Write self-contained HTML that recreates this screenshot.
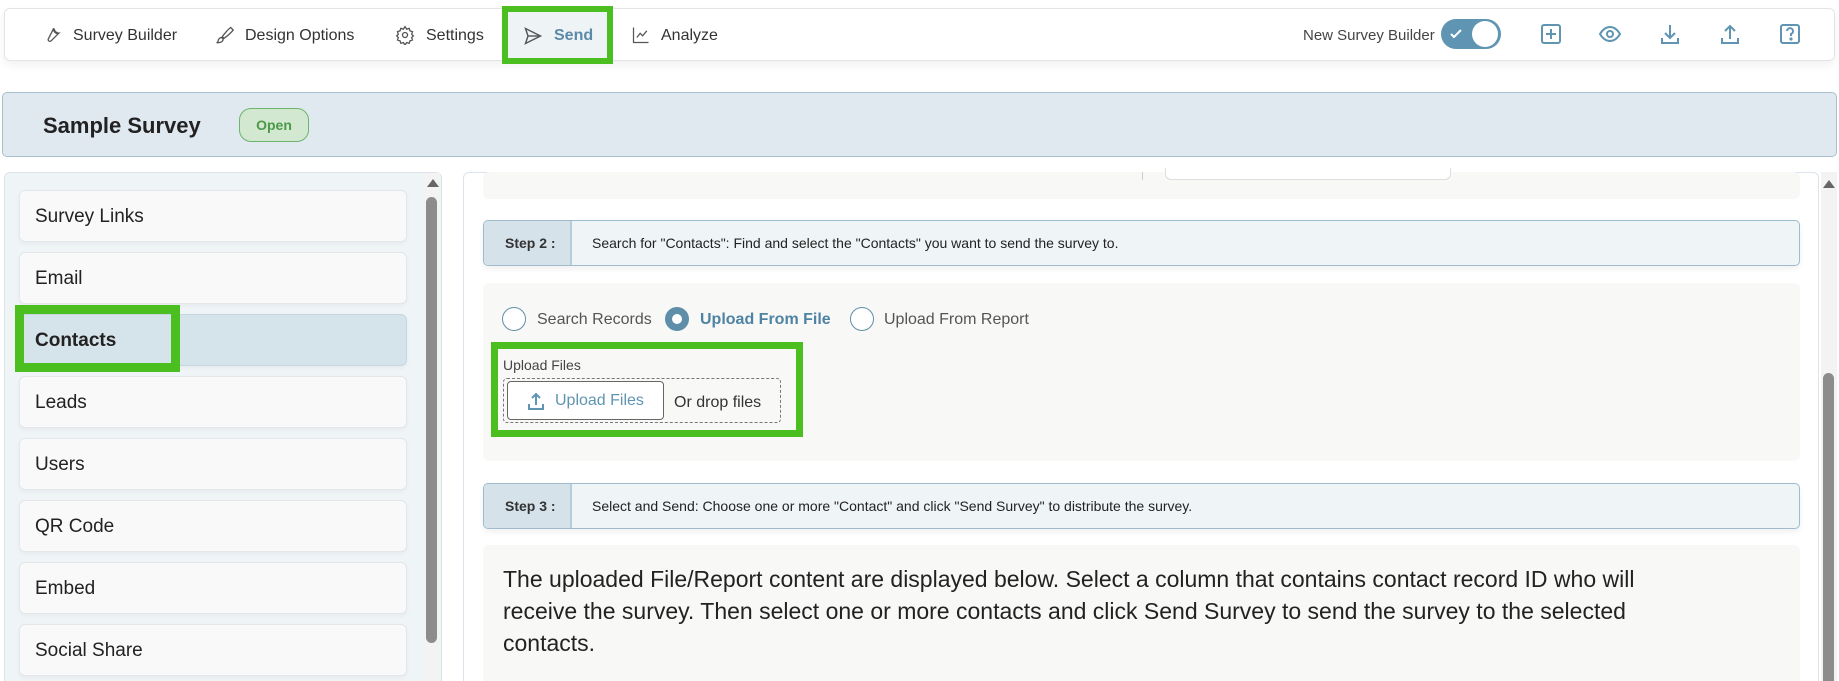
<!DOCTYPE html>
<html><head><meta charset="utf-8"><style>
*{box-sizing:border-box;margin:0;padding:0}
html,body{width:1839px;height:681px;overflow:hidden}
body{background:#fff;font-family:"Liberation Sans",sans-serif;color:#333;position:relative}
.a{position:absolute}
.nav{left:4px;top:8px;width:1831px;height:53px;border:1px solid #e2e5e8;border-radius:6px;background:#fff;box-shadow:0 4px 10px rgba(0,0,0,.06)}
.ni{position:absolute;top:27px;font-size:16px;color:#333}
.hdr{left:2px;top:92px;width:1835px;height:65px;background:#e1e9f0;border:1px solid #a9c0cf;border-radius:5px}
.lp{left:4px;top:172px;width:438px;height:520px;background:#eff4f7;border:1px solid #dbe4ea;border-radius:6px}
.it{position:absolute;left:19px;width:388px;height:52px;background:#f9f9f9;border:1px solid #e3e7ea;border-radius:6px;font-size:19px;color:#222;padding:0 0 0 15px;line-height:52px;box-shadow:0 2px 4px rgba(0,0,0,.04)}
.rp{left:463px;top:172px;width:1356px;height:520px;border:1px solid #dbe4ea;border-radius:6px;background:#fff}
.step{position:absolute;left:483px;width:1317px;height:46px;background:#eff4f7;border:1px solid #9fbccf;border-radius:5px;font-size:14px;box-shadow:0 3px 6px rgba(0,0,0,.06)}
.step .l{position:absolute;left:0;top:0;width:88px;height:44px;background:#d5e2ea;border-right:2px solid #b8cddb;font-weight:bold;line-height:44px;padding-left:21px;border-radius:4px 0 0 4px}
.step .t{position:absolute;left:108px;top:0;line-height:44px;color:#222}
.box{position:absolute;left:483px;width:1317px;background:#f8f8f7;border-radius:6px}
.rad{position:absolute;top:307px;width:24px;height:24px;border-radius:50%;border:1.5px solid #5f8fa8;background:#fff}
.rl{position:absolute;top:311px;font-size:16px;color:#555}
</style></head><body>
<div class="a nav"></div>
<svg class="a" style="left:42px;top:25px" width="20" height="20" viewBox="0 0 24 24" fill="none" stroke="#555" stroke-width="1.6"><path d="M14 4a5 5 0 0 0 6 6l-9 9a2 2 0 0 1-3-3z"/><path d="M14 4l2 4 4 2"/></svg>
<div class="ni" style="left:73px">Survey Builder</div>
<svg class="a" style="left:214px;top:25px" width="20" height="20" viewBox="0 0 24 24" fill="none" stroke="#555" stroke-width="1.6"><path d="M20 3c-3 2-8 8-10 11l2 2c3-2 9-7 11-10z"/><path d="M9 15c-2 0-4 2-4 4 0 1-1 2-2 2 4 1 8-1 8-4z"/></svg>
<div class="ni" style="left:245px">Design Options</div>
<svg class="a" style="left:395px;top:25px" width="20" height="20" viewBox="0 0 24 24" fill="none" stroke="#555" stroke-width="1.6"><circle cx="12" cy="12" r="3"/><path d="M12 2l2 3 3-1 1 3 3 1-1 3 2 2-2 2 1 3-3 1-1 3-3-1-2 3-2-3-3 1-1-3-3-1 1-3-2-2 2-2-1-3 3-1 1-3 3 1z"/></svg>
<div class="ni" style="left:426px">Settings</div>
<div class="a" style="left:502px;top:6px;width:111px;height:58px;border:6px solid #4cbf20;background:#eef3f6"></div>
<svg class="a" style="left:523px;top:26px" width="20" height="20" viewBox="0 0 24 24" fill="none" stroke="#555" stroke-width="1.7"><path d="M3 3l18 9-18 9 3-9z"/><path d="M6 12h15"/></svg>
<div class="ni" style="left:554px;font-weight:bold;color:#5b8aa8">Send</div>
<svg class="a" style="left:631px;top:25px" width="20" height="20" viewBox="0 0 24 24" fill="none" stroke="#555" stroke-width="1.5"><path d="M3 3v18h18"/><path d="M7 15l4-5 3 3 5-6"/></svg>
<div class="ni" style="left:661px">Analyze</div>
<div class="ni" style="left:1303px;font-size:15px;color:#444;top:27px">New Survey Builder</div>
<div class="a" style="left:1441px;top:19px;width:60px;height:30px;border-radius:15px;background:#5f95b2"></div>
<div class="a" style="left:1472px;top:21px;width:26px;height:26px;border-radius:50%;background:#fff"></div>
<svg class="a" style="left:1448px;top:26px" width="16" height="16" viewBox="0 0 16 16" fill="none" stroke="#fff" stroke-width="2"><path d="M3 8l3 3 7-7"/></svg>
<svg class="a" style="left:1540px;top:22px" width="22" height="24" viewBox="0 0 22 24" fill="none" stroke="#5f95b2" stroke-width="2"><rect x="2" y="3" width="18" height="18" rx="2"/><path d="M11 7v10M6 12h10"/></svg>
<svg class="a" style="left:1598px;top:24px" width="24" height="20" viewBox="0 0 24 20" fill="none" stroke="#5f95b2" stroke-width="2"><path d="M2 10c3-5 6-7 10-7s7 2 10 7c-3 5-6 7-10 7S5 15 2 10z"/><circle cx="12" cy="10" r="3"/></svg>
<svg class="a" style="left:1659px;top:22px" width="22" height="24" viewBox="0 0 22 24" fill="none" stroke="#5f95b2" stroke-width="2"><path d="M11 3v13M6 11l5 5 5-5M3 16v5h16v-5"/></svg>
<svg class="a" style="left:1719px;top:22px" width="22" height="24" viewBox="0 0 22 24" fill="none" stroke="#5f95b2" stroke-width="2"><path d="M11 17V4M6 9l5-5 5 5M3 16v5h16v-5"/></svg>
<svg class="a" style="left:1779px;top:22px" width="22" height="24" viewBox="0 0 22 24" fill="none" stroke="#5f95b2" stroke-width="2"><rect x="2" y="3" width="18" height="18" rx="2"/><path d="M8 9a3 3 0 1 1 4 3v2"/><circle cx="12" cy="17" r=".6" fill="#5f95b2"/></svg>

<div class="a hdr"></div>
<div class="a" style="left:43px;top:113px;font-size:22px;font-weight:bold;color:#222">Sample Survey</div>
<div class="a" style="left:239px;top:108px;width:70px;height:34px;border:1px solid #6db46a;border-radius:12px;background:#d2e8d0;color:#4b9a48;font-size:14px;font-weight:bold;text-align:center;line-height:32px">Open</div>

<div class="a lp"></div>
<div class="a" style="left:424px;top:173px;width:16px;height:510px;background:#f3f3f3"></div>
<div class="a" style="left:427px;top:179px;width:0;height:0;border-left:6px solid transparent;border-right:6px solid transparent;border-bottom:8px solid #666"></div>
<div class="a" style="left:426px;top:197px;width:11px;height:446px;background:#8c8c8c;border-radius:6px"></div>
<div class="it" style="top:190px">Survey Links</div>
<div class="it" style="top:252px">Email</div>
<div class="it" style="top:314px;background:#d5e3eb;border-color:#c6d6e0;font-weight:bold">Contacts</div>
<div class="a" style="left:15px;top:305px;width:165px;height:67px;border:9px solid #4cbf20"></div>
<div class="it" style="top:376px">Leads</div>
<div class="it" style="top:438px">Users</div>
<div class="it" style="top:500px">QR Code</div>
<div class="it" style="top:562px">Embed</div>
<div class="it" style="top:624px">Social Share</div>

<div class="a rp"></div>
<div class="box" style="top:172px;height:27px"></div>
<div class="a" style="left:1142px;top:172px;width:1px;height:8px;background:#ccc"></div>
<div class="a" style="left:1165px;top:168px;width:286px;height:12px;border:1px solid #ddd;border-top:none;border-radius:0 0 6px 6px;background:#fff"></div>
<div class="step" style="top:220px"><div class="l">Step 2 :</div><div class="t">Search for "Contacts": Find and select the "Contacts" you want to send the survey to.</div></div>
<div class="box" style="top:283px;height:178px"></div>
<div class="rad" style="left:502px"></div><div class="rl" style="left:537px">Search Records</div>
<div class="rad" style="left:665px;border:7px solid #5f8fa8"></div><div class="rl" style="left:700px;font-weight:bold;color:#4f83a3">Upload From File</div>
<div class="rad" style="left:850px"></div><div class="rl" style="left:884px">Upload From Report</div>
<div class="a" style="left:491px;top:342px;width:312px;height:95px;border:7px solid #4cbf20"></div>
<div class="a" style="left:503px;top:357px;font-size:14px;color:#444">Upload Files</div>
<div class="a" style="left:503px;top:378px;width:278px;height:45px;border:1px dashed #777;border-radius:4px"></div>
<div class="a" style="left:507px;top:381px;width:157px;height:39px;border:1px solid #666;border-radius:4px;background:#fff"></div>
<svg class="a" style="left:526px;top:391px" width="20" height="20" viewBox="0 0 20 20" fill="none" stroke="#5f95b2" stroke-width="2"><path d="M10 14V3M6 7l4-4 4 4M3 13v5h14v-5"/></svg>
<div class="a" style="left:555px;top:392px;font-size:16px;color:#5f95b2">Upload Files</div>
<div class="a" style="left:674px;top:394px;font-size:16px;color:#333">Or drop files</div>
<div class="step" style="top:483px"><div class="l">Step 3 :</div><div class="t">Select and Send: Choose one or more "Contact" and click "Send Survey" to distribute the survey.</div></div>
<div class="box" style="top:545px;height:150px"></div>
<div class="a" style="left:503px;top:563px;width:1290px;font-size:23px;line-height:32px;color:#222;white-space:nowrap">The uploaded File/Report content are displayed below. Select a column that contains contact record ID who will<br>receive the survey. Then select one or more contacts and click Send Survey to send the survey to the selected<br>contacts.</div>
<div class="a" style="left:1821px;top:172px;width:16px;height:509px;background:#f3f3f3"></div>
<div class="a" style="left:1823px;top:180px;width:0;height:0;border-left:6px solid transparent;border-right:6px solid transparent;border-bottom:8px solid #666"></div>
<div class="a" style="left:1823px;top:373px;width:11px;height:320px;background:#8c8c8c;border-radius:6px"></div>
</body></html>
